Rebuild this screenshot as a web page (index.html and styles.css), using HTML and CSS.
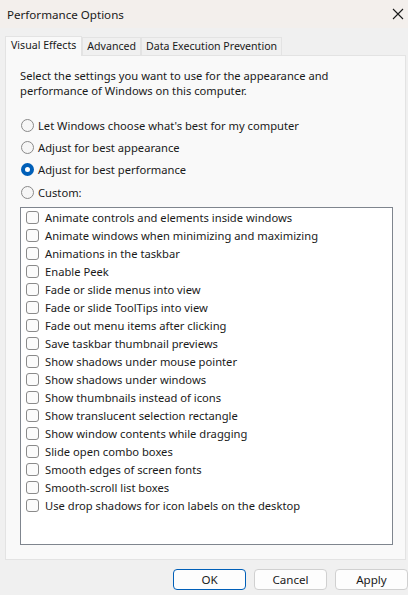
FILE: index.html
```html
<!DOCTYPE html>
<html lang="en">
<head>
  <meta charset="UTF-8" />
  <title>Performance Options</title>
  <link rel="stylesheet" href="styles.css">
</head>
<body>
  <div class="titlebar">
    <span class="title">Performance Options</span>
    <svg class="close" width="12" height="12" viewBox="0 0 12 12"><path d="M1 1L11 11M11 1L1 11" stroke="#1a1a1a" stroke-width="1.1" fill="none"/></svg>
  </div>

  <div class="tabs">
    <div class="tab active">Visual Effects</div>
    <div class="tab">Advanced</div>
    <div class="tab">Data Execution Prevention</div>
  </div>

  <div class="panel">
    <p class="intro">Select the settings you want to use for the appearance and performance of Windows on this computer.</p>

    <div class="radios">
      <label class="radio"><span class="dot"></span>Let Windows choose what's best for my computer</label>
      <label class="radio"><span class="dot"></span>Adjust for best appearance</label>
      <label class="radio checked"><span class="dot"></span>Adjust for best performance</label>
      <label class="radio"><span class="dot"></span>Custom:</label>
    </div>

    <div class="list">
      <label class="item"><span class="box"></span>Animate controls and elements inside windows</label>
      <label class="item"><span class="box"></span>Animate windows when minimizing and maximizing</label>
      <label class="item"><span class="box"></span>Animations in the taskbar</label>
      <label class="item"><span class="box"></span>Enable Peek</label>
      <label class="item"><span class="box"></span>Fade or slide menus into view</label>
      <label class="item"><span class="box"></span>Fade or slide ToolTips into view</label>
      <label class="item"><span class="box"></span>Fade out menu items after clicking</label>
      <label class="item"><span class="box"></span>Save taskbar thumbnail previews</label>
      <label class="item"><span class="box"></span>Show shadows under mouse pointer</label>
      <label class="item"><span class="box"></span>Show shadows under windows</label>
      <label class="item"><span class="box"></span>Show thumbnails instead of icons</label>
      <label class="item"><span class="box"></span>Show translucent selection rectangle</label>
      <label class="item"><span class="box"></span>Show window contents while dragging</label>
      <label class="item"><span class="box"></span>Slide open combo boxes</label>
      <label class="item"><span class="box"></span>Smooth edges of screen fonts</label>
      <label class="item"><span class="box"></span>Smooth-scroll list boxes</label>
      <label class="item"><span class="box"></span>Use drop shadows for icon labels on the desktop</label>
    </div>
  </div>

  <div class="buttons">
    <button class="default">OK</button>
    <button>Cancel</button>
    <button>Apply</button>
  </div>
</body>
</html>
```

FILE: styles.css
```css
body {
  margin: 0;
  background: #f0f0f0;
  color: #1a1a1a;
  font-family: "Noto Sans", "Open Sans", sans-serif;
  font-size: 11.2px;
  width: 408px;
  overflow: hidden;
}
.titlebar {
  height: 28px;
  background: #f3efec;
  display: flex;
  align-items: center;
  justify-content: space-between;
  padding: 0 4px 0 7px;
}
.title {
  font-size: 11.6px;
}
/* linguette */
.tabs {
  display: flex;
  align-items: flex-end;
  margin-top: 7px;
  padding-left: 5px;
  height: 20px;
}
.tab {
  height: 18px;
  line-height: 17px;
  padding: 0 4px;
  font-size: 10.6px;
  border: 1px solid #e3e3e3;
  border-bottom: none;
  background: #f0f0f0;
  box-sizing: border-box;
}
.tab.active {
  height: 20px;
  line-height: 17px;
  padding: 0 5px;
  background: #f9f9f9;
  margin-bottom: -1px;
  position: relative;
  z-index: 1;
}
.panel {
  margin: 0 2px 0 5px;
  height: 505px;
  box-sizing: border-box;
  background: #f9f9f9;
  border: 1px solid #e3e3e3;
  padding: 12px 11px 0 14px;
}
.intro {
  margin: 0;
  line-height: 15px;
  width: 310px;
}
.radios {
  margin-top: 16px;
  display: flex;
  flex-direction: column;
}
.radio {
  display: flex;
  align-items: center;
  height: 22.3px;
}
.dot {
  width: 11px;
  height: 11px;
  border: 1px solid #8a8a8a;
  border-radius: 50%;
  background: #f6f6f6;
  margin: 0 4px 0 1px;
  box-sizing: content-box;
}
.radio.checked .dot {
  background: #fff;
  border: 4px solid #005fb8;
  width: 5px;
  height: 5px;
}
.list {
  margin-top: 4px;
  height: 338px;
  box-sizing: border-box;
  background: #fff;
  border: 1px solid #7f858e;
  padding-top: 0;
  width: 373px;
}
.item {
  display: flex;
  align-items: center;
  height: 18px;
}
.box {
  width: 11px;
  height: 11px;
  border: 1px solid #8a8a8a;
  border-radius: 3px;
  background: #fbfbfb;
  margin: 0 6px 0 5px;
}
.buttons {
  display: flex;
  gap: 8px;
  padding: 9px 0 0 173px;
}
.buttons button {
  width: 73px;
  height: 21px;
  flex: none;
  background: #fdfdfd;
  border: 1px solid #d0d0d0;
  border-radius: 4px;
  font-family: "Noto Sans", "Open Sans", sans-serif;
  font-size: 11.6px;
  color: #1a1a1a;
  padding: 0;
}
.buttons button.default {
  border-color: #005fb8;
}
```
